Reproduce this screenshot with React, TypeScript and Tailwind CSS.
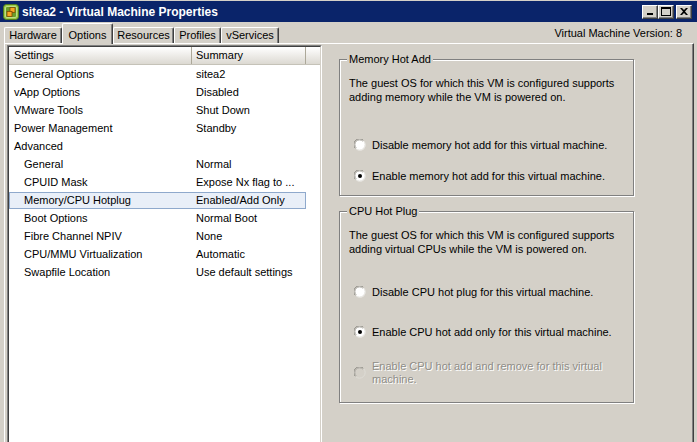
import type { ReactNode } from "react";

type Row = {
  name: string;
  value: string;
  indent?: boolean;
  selected?: boolean;
};

const rows: Row[] = [
  { name: "General Options", value: "sitea2" },
  { name: "vApp Options", value: "Disabled" },
  { name: "VMware Tools", value: "Shut Down" },
  { name: "Power Management", value: "Standby" },
  { name: "Advanced", value: "" },
  { name: "General", value: "Normal", indent: true },
  { name: "CPUID Mask", value: "Expose Nx flag to ...", indent: true },
  { name: "Memory/CPU Hotplug", value: "Enabled/Add Only", indent: true, selected: true },
  { name: "Boot Options", value: "Normal Boot", indent: true },
  { name: "Fibre Channel NPIV", value: "None", indent: true },
  { name: "CPU/MMU Virtualization", value: "Automatic", indent: true },
  { name: "Swapfile Location", value: "Use default settings", indent: true },
];

const tabs = [
  { label: "Hardware", width: "w-[58px]" },
  { label: "Options", width: "w-[51px]", active: true },
  { label: "Resources", width: "w-[61px]" },
  { label: "Profiles", width: "w-[47px]" },
  { label: "vServices", width: "w-[58px]" },
];

function VmIcon() {
  return (
    <svg width="16" height="16" viewBox="0 0 16 16" className="shrink-0">
      <rect x="0.5" y="0.5" width="15" height="15" rx="3" fill="#9ccb4c" stroke="#4f7d1c" />
      <rect x="2.5" y="2.5" width="11" height="11" rx="1.5" fill="#6a9d2a" stroke="#c9e89a" strokeWidth="0.8" />
      <rect x="7" y="3.5" width="5" height="5" fill="#f6a623" stroke="#7a4a05" strokeWidth="0.8" />
      <rect x="4" y="7.5" width="5" height="5" fill="#f6a623" stroke="#7a4a05" strokeWidth="0.8" />
    </svg>
  );
}

function CaptionButton({ children }: { children: ReactNode }) {
  return (
    <div className="flex h-[14px] w-[16px] items-center justify-center border border-t-white border-l-white border-r-[#404040] border-b-[#404040] bg-[#d4d0c8] shadow-[inset_-1px_-1px_0_#808080]">
      {children}
    </div>
  );
}

function Radio({ checked, disabled }: { checked?: boolean; disabled?: boolean }) {
  return (
    <svg width="12" height="12" viewBox="0 0 12 12" className="shrink-0">
      <circle cx="6" cy="6" r="5.5" fill={disabled ? "#d4d0c8" : "#fff"} />
      <path d="M1.5 9.5 A5.2 5.2 0 0 1 9.5 1.5" fill="none" stroke="#85837d" strokeWidth="1" />
      <path d="M2.3 8.8 A4.3 4.3 0 0 1 8.8 2.3" fill="none" stroke="#b4b1aa" strokeWidth="1" />
      <path d="M9.5 1.5 A5.2 5.2 0 0 1 1.5 9.5" fill="none" stroke="#dedcd6" strokeWidth="1" />
      {checked && <circle cx="6" cy="6" r="2" fill="#000" />}
    </svg>
  );
}

function Option({ label, checked, className }: { label: string; checked?: boolean; className: string }) {
  return (
    <div className={`flex h-[14px] items-center gap-[6px] pl-[14px] leading-[14px] ${className}`}>
      <Radio checked={checked} />
      <span>{label}</span>
    </div>
  );
}

function GroupBox({ title, className, children }: { title: string; className: string; children: ReactNode }) {
  return (
    <div
      className={`relative w-[295px] border border-[#808080] shadow-[1px_1px_0_#fff,inset_1px_1px_0_#fff] ${className}`}
    >
      <span className="absolute top-[-7px] left-[7px] bg-[#d4d0c8] px-[2px] leading-[13px]">{title}</span>
      {children}
    </div>
  );
}

export default function App() {
  return (
    <div className="h-[442px] w-[697px] overflow-hidden bg-[#d4d0c8] font-['Liberation_Sans',Arial,sans-serif] text-[11px] text-black">
      {/* caption */}
      <div className="flex h-[22px] items-center gap-[3px] border-t border-[#d4d0c8] bg-[#0a246a] pl-[3px] pr-[5px]">
        <VmIcon />
        <span className="text-[12px] font-bold text-white">sitea2 - Virtual Machine Properties</span>
        <div className="ml-auto flex items-center">
          <CaptionButton>
            <svg width="8" height="8" viewBox="0 0 8 8">
              <rect x="1" y="5" width="6" height="2" fill="#000" />
            </svg>
          </CaptionButton>
          <CaptionButton>
            <svg width="10" height="9" viewBox="0 0 10 9">
              <rect x="0.5" y="0.5" width="9" height="8" fill="none" stroke="#000" />
              <rect x="0" y="0" width="10" height="2" fill="#000" />
            </svg>
          </CaptionButton>
          <div className="ml-[2px]">
            <CaptionButton>
              <svg width="8" height="7" viewBox="0 0 8 7">
                <path d="M0 0 L2 0 L4 2 L6 0 L8 0 L5 3.5 L8 7 L6 7 L4 5 L2 7 L0 7 L3 3.5 Z" fill="#000" />
              </svg>
            </CaptionButton>
          </div>
        </div>
      </div>

      {/* tab strip */}
      <div className="flex h-[21px] items-end pl-[4px]">
        {tabs.map((tab) =>
          tab.active ? (
            <div
              key={tab.label}
              className={`relative z-10 mb-[-1px] flex h-[21px] items-start justify-center rounded-t-[2px] border-t border-l border-t-white border-l-white border-r border-r-[#404040] bg-[#d4d0c8] pt-[3px] shadow-[inset_-1px_0_0_#808080] ${tab.width}`}
            >
              {tab.label}
            </div>
          ) : (
            <div
              key={tab.label}
              className={`flex h-[16px] items-center justify-center rounded-t-[2px] border-t border-l border-t-white border-l-white border-r border-r-[#404040] shadow-[inset_-1px_0_0_#808080] ${tab.width}`}
            >
              {tab.label}
            </div>
          ),
        )}
        <span className="mr-[15px] mb-[2px] ml-auto">Virtual Machine Version: 8</span>
      </div>

      {/* tab page */}
      <div className="mr-[3px] ml-[4px] flex h-[420px] border-t border-l border-t-white border-l-white border-r border-r-[#404040] shadow-[inset_-1px_0_0_#808080]">
        {/* settings list */}
        <div className="mt-[1px] ml-[2px] h-[420px] w-[315px] border border-t-[#808080] border-l-[#808080] border-r-white border-b-white">
          <div className="h-full border border-t-[#404040] border-l-[#404040] border-r-[#d4d0c8] border-b-[#d4d0c8] bg-white">
            <div className="flex h-[18px] border-b border-[#c5c2b8] bg-linear-to-b from-white to-[#dcd9d2]">
              <div className="flex w-[183px] items-center border-r border-[#aca899] pl-[5px]">Settings</div>
              <div className="flex w-[114px] items-center border-r border-[#aca899] pl-[4px]">Summary</div>
              <div className="flex-1" />
            </div>
            {rows.map((row) => (
              <div key={row.name} className="h-[18px] pt-px">
                <div
                  className={`flex h-[17px] w-[297px] items-center border ${
                    row.selected ? "border-[#8fa9cc] bg-[#e9eff8]" : "border-transparent"
                  }`}
                >
                  <span className={`w-[182px] shrink-0 ${row.indent ? "pl-[14px]" : "pl-[4px]"}`}>{row.name}</span>
                  <span className="pl-[4px] whitespace-nowrap">{row.value}</span>
                </div>
              </div>
            ))}
          </div>
        </div>

        {/* detail pane */}
        <div className="flex flex-col pl-[17px]">
          <GroupBox title="Memory Hot Add" className="mt-[15px] pt-[16px] pb-[12px]">
            <p className="pl-[9px] leading-[14px]">
              The guest OS for which this VM is configured supports
              <br />
              adding memory while the VM is powered on.
            </p>
            <Option className="mt-[34px]" label="Disable memory hot add for this virtual machine." />
            <Option className="mt-[17px]" checked label="Enable memory hot add for this virtual machine." />
          </GroupBox>

          <GroupBox title="CPU Hot Plug" className="mt-[15px] pt-[16px] pb-[16px]">
            <p className="pl-[9px] leading-[14px]">
              The guest OS for which this VM is configured supports
              <br />
              adding virtual CPUs while the VM is powered on.
            </p>
            <Option className="mt-[29px]" label="Disable CPU hot plug for this virtual machine." />
            <Option className="mt-[26px]" checked label="Enable CPU hot add only for this virtual machine." />
            <div className="mt-[21px] flex items-center gap-[6px] pl-[14px]">
              <Radio disabled />
              <span className="leading-[13px] text-[#8f8d87] [text-shadow:1px_1px_0_#fff]">
                Enable CPU hot add and remove for this virtual
                <br />
                machine.
              </span>
            </div>
          </GroupBox>
        </div>
      </div>
    </div>
  );
}
